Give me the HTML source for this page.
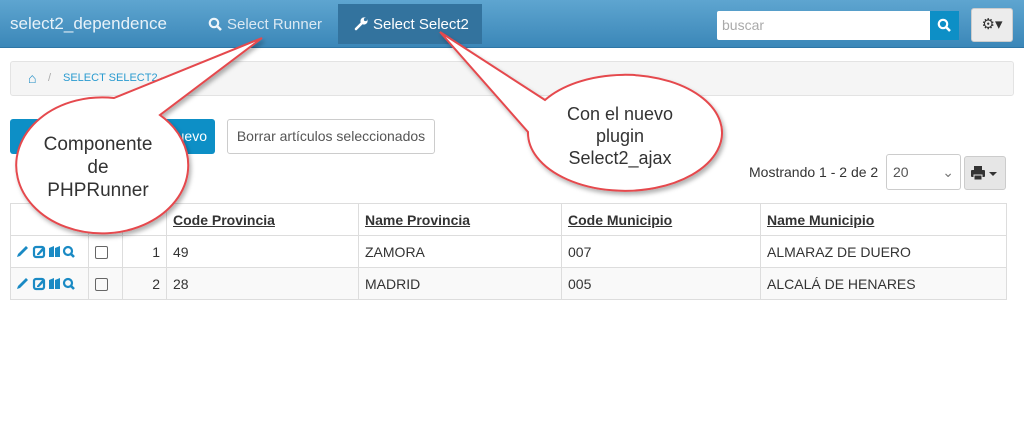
<!DOCTYPE html><html><head><meta charset="utf-8"><style>
*{box-sizing:border-box}body{margin:0;width:1024px;height:432px;background:#fff;font-family:"Liberation Sans",sans-serif;position:relative;overflow:hidden;color:#333}
.nav{position:absolute;left:0;top:0;width:1024px;height:48px;background:linear-gradient(#5ea5d0,#3b87b8);border-bottom:1px solid #2e76a6}
.abs{position:absolute}
.brand{left:10px;top:14px;font-size:17px;color:#e8f2f9}
.nl{top:16px;font-size:15px;color:#dbe9f3}
.act{left:338px;top:4px;width:144px;height:40px;background:#33739e}
.crumb{left:10px;top:61px;width:1004px;height:35px;background:#f5f5f5;border:1px solid #e3e3e3;border-radius:3px}
table{position:absolute;left:10px;top:203px;border-collapse:collapse;font-size:14px}
td{border:1px solid #ddd;height:32px;padding:0 6px}
th{border:1px solid #ddd;height:32px;text-align:left;padding:0 6px;text-decoration:underline;font-size:14px}
.cb{display:inline-block;width:13px;height:13px;border:1.5px solid #666;border-radius:2px;vertical-align:middle}
</style></head><body>
<div class="nav"></div>
<div class="abs act"></div>
<div class="abs brand">select2_dependence</div>
<svg class="abs" style="left:208px;top:17px" width="14" height="14"><circle cx="6" cy="6" r="4.2" fill="none" stroke="#eef5fa" stroke-width="2.2"/><path d="M9,9 L13,13" stroke="#eef5fa" stroke-width="2.6"/></svg>
<div class="abs nl" style="left:227px">Select Runner</div>
<svg class="abs" style="left:354px;top:16px" width="15" height="15"><path d="M2,13 L8,7" stroke="#fff" stroke-width="2.6" stroke-linecap="round"/><circle cx="10" cy="5" r="3.6" fill="#fff"/><circle cx="11.5" cy="3.5" r="1.6" fill="#33739e"/></svg>
<div class="abs nl" style="left:373px;color:#fff">Select Select2</div>
<div class="abs" style="left:717px;top:11px;width:213px;height:29px;background:#fff;border-radius:2px 0 0 2px;color:#aaa;font-size:14px;padding:6px 5px">buscar</div>
<div class="abs" style="left:930px;top:11px;width:29px;height:29px;background:#0d8fc6"></div>
<svg class="abs" style="left:937px;top:18px" width="15" height="15"><circle cx="6" cy="6" r="4.2" fill="none" stroke="#fff" stroke-width="2.2"/><path d="M9,9 L13,13" stroke="#fff" stroke-width="2.6"/></svg>
<div class="abs" style="left:971px;top:8px;width:42px;height:34px;background:#ececec;border:1px solid #ccc;border-radius:3px;text-align:center;line-height:32px;font-size:15px">&#x2699;&#x25BE;</div>
<div class="abs crumb"></div>
<div class="abs" style="left:28px;top:70px;color:#1a8ac4;font-size:14px">&#x2302;</div>
<div class="abs" style="left:48px;top:72px;color:#aaa;font-size:11px">/</div>
<div class="abs" style="left:63px;top:72px;color:#2a9bd0;font-size:11px">SELECT SELECT2 -</div>
<div class="abs" style="left:10px;top:119px;width:205px;height:35px;background:#0d8fc6;border-radius:3px;color:#fff;font-size:14px;line-height:35px;text-align:right;padding-right:8px">Nuevo</div>
<div class="abs" style="left:227px;top:119px;width:208px;height:35px;border:1px solid #ccc;border-radius:3px;font-size:14px;line-height:33px;text-align:center;color:#555">Borrar artículos seleccionados</div>
<div class="abs" style="left:749px;top:164px;font-size:14px">Mostrando 1 - 2 de 2</div>
<div class="abs" style="left:886px;top:154px;width:75px;height:36px;border:1px solid #ccc;border-radius:3px;font-size:14px;padding:9px 6px;color:#555">20<span style="float:right;color:#777">&#x2304;</span></div>
<div class="abs" style="left:964px;top:156px;width:42px;height:34px;background:#e6e6e6;border:1px solid #ccc;border-radius:3px"></div>
<svg class="abs" style="left:971px;top:165px" width="30" height="16"><rect x="3" y="1" width="8" height="4" fill="#333"/><rect x="0" y="5" width="14" height="7" rx="1" fill="#333"/><rect x="3" y="10" width="8" height="5" fill="#333" stroke="#e6e6e6"/><path d="M18,7 L26,7 L22,11Z" fill="#333"/></svg>
<table>
<tr><th style="width:78px"></th><th style="width:34px"></th><th style="width:44px"></th><th style="width:192px">Code Provincia</th><th style="width:203px">Name Provincia</th><th style="width:199px">Code Municipio</th><th style="width:246px">Name Municipio</th></tr>
<tr><td></td><td><span class="cb"></span></td><td style="text-align:right">1</td><td>49</td><td>ZAMORA</td><td>007</td><td>ALMARAZ DE DUERO</td></tr>
<tr style="background:#f9f9f9"><td></td><td><span class="cb"></span></td><td style="text-align:right">2</td><td>28</td><td>MADRID</td><td>005</td><td>ALCALÁ DE HENARES</td></tr>
</table>
<svg class="abs" style="left:0;top:0" width="1024" height="432">
<defs><filter id="s"><feDropShadow dx="2" dy="3" stdDeviation="2" flood-opacity="0.3"/></filter>
<g id="ic" fill="#1a8ac4" stroke="none">
<path d="M1,13 L2,10 L10,2 L12,4 L4,12Z"/>
<rect x="18" y="3" width="10" height="10" rx="2" fill="none" stroke="#1a8ac4" stroke-width="2.2"/><path d="M21,10 L27,3 L29,5 L23,11 L21,11Z"/>
<path d="M33,4 L38,2 L38,13 L33,13Z M39,4 L44,2 L44,13 L39,13Z"/>
<circle cx="52" cy="7" r="4" fill="none" stroke="#1a8ac4" stroke-width="2.2"/><path d="M55,10 L58,13" stroke="#1a8ac4" stroke-width="2.6"/>
</g></defs>
<use href="#ic" x="16" y="244"/><use href="#ic" x="16" y="276"/>
<path filter="url(#s)" d="M262,38 L114,98 A86,68 0 1 0 160,115 Z" fill="#fff" stroke="#e5484d" stroke-width="2"/>
<path filter="url(#s)" d="M440,32 L545,100 A97,58 0 1 1 528,132 Z" fill="#fff" stroke="#e5484d" stroke-width="2"/>
<text x="98" y="150" font-size="19" text-anchor="middle" fill="#333" font-family="Liberation Sans">Componente</text>
<text x="98" y="173" font-size="19" text-anchor="middle" fill="#333" font-family="Liberation Sans">de</text>
<text x="98" y="196" font-size="19" text-anchor="middle" fill="#333" font-family="Liberation Sans">PHPRunner</text>
<text x="620" y="120" font-size="18" text-anchor="middle" fill="#333" font-family="Liberation Sans">Con el nuevo</text>
<text x="620" y="142" font-size="18" text-anchor="middle" fill="#333" font-family="Liberation Sans">plugin</text>
<text x="620" y="164" font-size="18" text-anchor="middle" fill="#333" font-family="Liberation Sans">Select2_ajax</text>
</svg>
</body></html>
